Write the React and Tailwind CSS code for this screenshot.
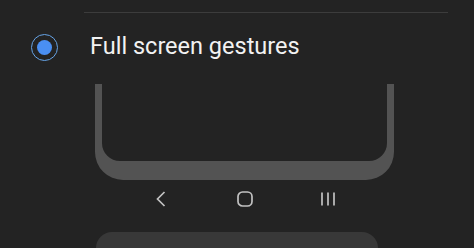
export default function App() {
  return (
    <div className="w-[474px] h-[248px] bg-[#232323] overflow-hidden flex flex-col font-['Roboto',sans-serif]">
      <div className="ml-[84px] mt-[12px] w-[364px] h-px bg-[#3c3c3c]" />

      <div className="flex items-center mt-[20px] h-[28px]">
        <div className="ml-[31px] w-[27px] h-[27px] rounded-full border-[1.5px] border-[#66a3e6] flex items-center justify-center">
          <div className="w-[15px] h-[15px] rounded-full bg-[#4a8ff2]" />
        </div>
        <span className="ml-[32px] text-[23.5px] leading-none text-[#f2f2f2]">Full screen gestures</span>
      </div>

      <svg className="ml-[95px] mt-[23px] shrink-0" width="299" height="96" viewBox="0 0 299 96">
        <path
          d="M0 0 H7 V59 A18 18 0 0 0 25 77 H274 A18 18 0 0 0 292 59 V0 H299 V68 A28 28 0 0 1 271 96 H28 A28 28 0 0 1 0 68 Z"
          fill="#535353"
        />
      </svg>

      <div className="ml-[95px] w-[299px] h-[52px] flex justify-center pt-[11px] gap-[67px]">
        <svg width="16" height="16" viewBox="0 0 16 16">
          <polyline points="10.5,1 3.5,8 10.5,15" fill="none" stroke="#c2c2c2" strokeWidth="1.7" />
        </svg>
        <svg width="16" height="16" viewBox="0 0 16 16">
          <rect x="1" y="1" width="14" height="14" rx="4.5" fill="none" stroke="#c2c2c2" strokeWidth="1.7" />
        </svg>
        <svg width="16" height="16" viewBox="0 0 16 16">
          <line x1="2" y1="1.5" x2="2" y2="14.5" stroke="#c2c2c2" strokeWidth="1.7" />
          <line x1="8" y1="1.5" x2="8" y2="14.5" stroke="#c2c2c2" strokeWidth="1.7" />
          <line x1="14" y1="1.5" x2="14" y2="14.5" stroke="#c2c2c2" strokeWidth="1.7" />
        </svg>
      </div>

      <div className="ml-[96px] w-[282px] flex-1 rounded-t-[22px] bg-[#383838]" />
    </div>
  )
}
